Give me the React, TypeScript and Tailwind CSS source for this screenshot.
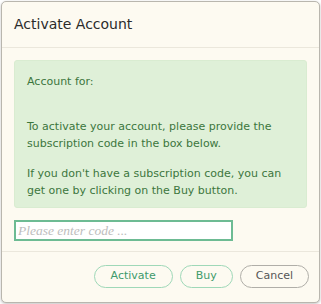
export default function App() {
  return (
    <div className="w-[321px] h-[304px] bg-white pt-px pl-px">
      <div
        className="w-[319px] h-[302px] flex flex-col rounded-[5px] border border-[#b9b6ae] bg-[#fdfaf1] shadow-[0_1px_3px_rgba(0,0,0,0.25)]"
        style={{ fontFamily: '"DejaVu Sans", Verdana, sans-serif' }}
      >
        <div className="h-[46px] shrink-0 flex items-center px-[12px] border-b border-[#ebe7dc]">
          <h1 className="text-[14px] text-[#2b2b2b] leading-none pb-[2px]">Activate Account</h1>
        </div>

        <div className="px-[12px] pt-[12px] pb-[10px] border-b border-[#ebe7dc]">
          <div className="rounded-[3px] bg-[#dff0d8] border border-[#d9ecd1] px-[12px] pt-[12px] pb-[8px] text-[11px] leading-[17px] text-[#3c763d]">
            <p>Account for:</p>
            <p className="text-[#d6ead0]">&nbsp;</p>
            <p className="mt-[11px]">
              To activate your account, please provide the subscription code in the box below.
            </p>
            <p className="mt-[13px]">
              If you don't have a subscription code, you can get one by clicking on the Buy button.
            </p>
          </div>
          <input
            type="text"
            placeholder="Please enter code ..."
            className="mt-[12px] block w-[219px] h-[21px] bg-white border-2 border-[#6dbb93] px-[2px] text-[13.5px] italic text-[#333] placeholder:text-[#bdbdbd] outline-none"
            style={{ fontFamily: '"Liberation Serif", Georgia, serif' }}
          />
        </div>

        <div className="flex-1 flex justify-end items-start gap-[7px] pt-[13px] pr-[10px]">
          <button className="h-[23px] px-[16px] rounded-full border border-[#9fd8b8] text-[11px] text-[#3f9b6c]">
            Activate
          </button>
          <button className="h-[23px] px-[15px] rounded-full border border-[#9fd8b8] text-[11px] text-[#3f9b6c]">
            Buy
          </button>
          <button className="h-[23px] px-[15px] rounded-full border border-[#b0aea8] text-[11px] text-[#555]">
            Cancel
          </button>
        </div>
      </div>
    </div>
  );
}
